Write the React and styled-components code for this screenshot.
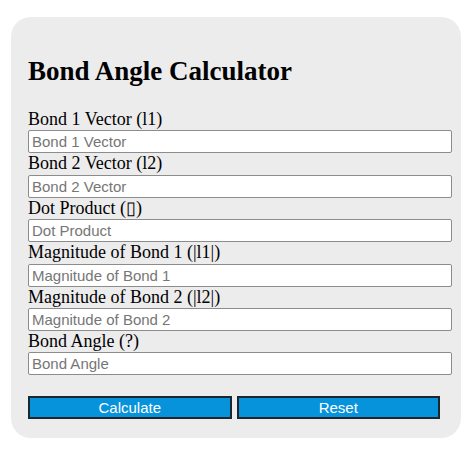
import styled, { createGlobalStyle } from "styled-components";

const Global = createGlobalStyle`
  body {
    margin: 0;
    background: #ffffff;
    font-family: "Liberation Serif", "Times New Roman", serif;
  }
`;

const Card = styled.div`
  box-sizing: border-box;
  width: 450px;
  height: 421px;
  margin: 17px 0 0 11px;
  padding: 17px;
  background: #ececec;
  border-radius: 20px;
`;

const Title = styled.h2`
  margin: 22px 0 22px;
  font-size: 27px;
  font-weight: bold;
  color: #000;
`;

const Field = styled.div`
  display: flex;
  flex-direction: column;
`;

const Label = styled.label`
  font-size: 18px;
  line-height: 21.4px;
  color: #000;
`;

const Input = styled.input`
  box-sizing: border-box;
  width: 424px;
  height: 23px;
  margin: 0;
  padding: 0 3px;
  border: 1px solid #8c8c8c;
  border-radius: 2px;
  background: #fff;
  font-family: "Liberation Sans", Arial, sans-serif;
  font-size: 15px;
  &::placeholder {
    color: #767676;
  }
`;

const Buttons = styled.div`
  display: flex;
  gap: 5px;
  width: 412px;
  margin-top: 21px;
`;

const Button = styled.button`
  flex: 1;
  height: 23px;
  padding: 0;
  border: 2px solid #1c2630;
  background: #0793db;
  color: #fff;
  font-family: "Liberation Sans", Arial, sans-serif;
  font-size: 15px;
  cursor: pointer;
`;

const fields = [
  ["Bond 1 Vector (l1)", "Bond 1 Vector"],
  ["Bond 2 Vector (l2)", "Bond 2 Vector"],
  ["Dot Product (\u25AF)", "Dot Product"],
  ["Magnitude of Bond 1 (|l1|)", "Magnitude of Bond 1"],
  ["Magnitude of Bond 2 (|l2|)", "Magnitude of Bond 2"],
  ["Bond Angle (?)", "Bond Angle"],
];

export default function App() {
  return (
    <>
      <Global />
      <Card>
        <Title>Bond Angle Calculator</Title>
        {fields.map(([label, ph]) => (
          <Field key={ph}>
            <Label>{label}</Label>
            <Input placeholder={ph} />
          </Field>
        ))}
        <Buttons>
          <Button>Calculate</Button>
          <Button>Reset</Button>
        </Buttons>
      </Card>
    </>
  );
}
